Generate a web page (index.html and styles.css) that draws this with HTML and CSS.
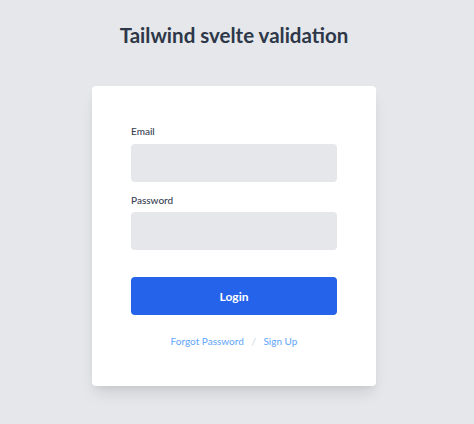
FILE: index.html
```html
<!DOCTYPE html>
<html lang="en">
<head>
<meta charset="utf-8">
<title>Tailwind svelte validation</title>
<link rel="stylesheet" href="styles.css">
</head>
<body>
<main class="page">
  <h1 class="title">Tailwind svelte validation</h1>
  <form class="card">
    <label class="label" for="email">Email</label>
    <input class="input" id="email" type="email">
    <label class="label" for="password">Password</label>
    <input class="input" id="password" type="password">
    <button class="btn" type="button">Login</button>
    <div class="links">
      <a class="link" href="#">Forgot Password</a>
      <span class="sep">/</span>
      <a class="link" href="#">Sign Up</a>
    </div>
  </form>
</main>
</body>
</html>
```
FILE: styles.css
```css
* { box-sizing: border-box; }
html, body {
  margin: 0;
  height: 100%;
}
body {
  background: #e5e7eb;
  font-family: Lato, "Open Sans", sans-serif;
  color: #374151;
}
.page {
  width: 284px;
  margin-left: 92px;
  padding-top: 21px;
  display: flex;
  flex-direction: column;
  align-items: stretch;
}
.title {
  margin: 0;
  text-align: center;
  font-size: 20.5px;
  line-height: 28px;
  font-weight: 700;
  color: #2d3748;
}
.card {
  margin-top: 37px;
  background: #fff;
  border-radius: 4px;
  box-shadow: 0 10px 15px -3px rgba(0,0,0,0.1), 0 4px 6px -2px rgba(0,0,0,0.05);
  padding: 37px 39px 37px;
  display: flex;
  flex-direction: column;
  height: 300px;
}
.label {
  font-size: 10px;
  line-height: 16px;
  font-weight: 500;
  color: #374151;
  margin-bottom: 4px;
}
.input {
  height: 38px;
  border: 0;
  border-radius: 4px;
  background: #e5e7eb;
  margin: 0 0 10px;
  padding: 0 12px;
}
.input:first-of-type { margin-top: 1px; }
.btn {
  margin-top: 17px;
  height: 38px;
  border: 0;
  border-radius: 4px;
  background: #2563eb;
  color: #fff;
  font-family: inherit;
  font-size: 12px;
  font-weight: 700;
}
.links {
  margin-top: 18px;
  text-align: center;
  font-size: 10px;
  line-height: 16px;
}
.link {
  color: #60a5fa;
  text-decoration: none;
}
.sep {
  color: #cbd5e1;
  margin: 0 5px;
}
```
